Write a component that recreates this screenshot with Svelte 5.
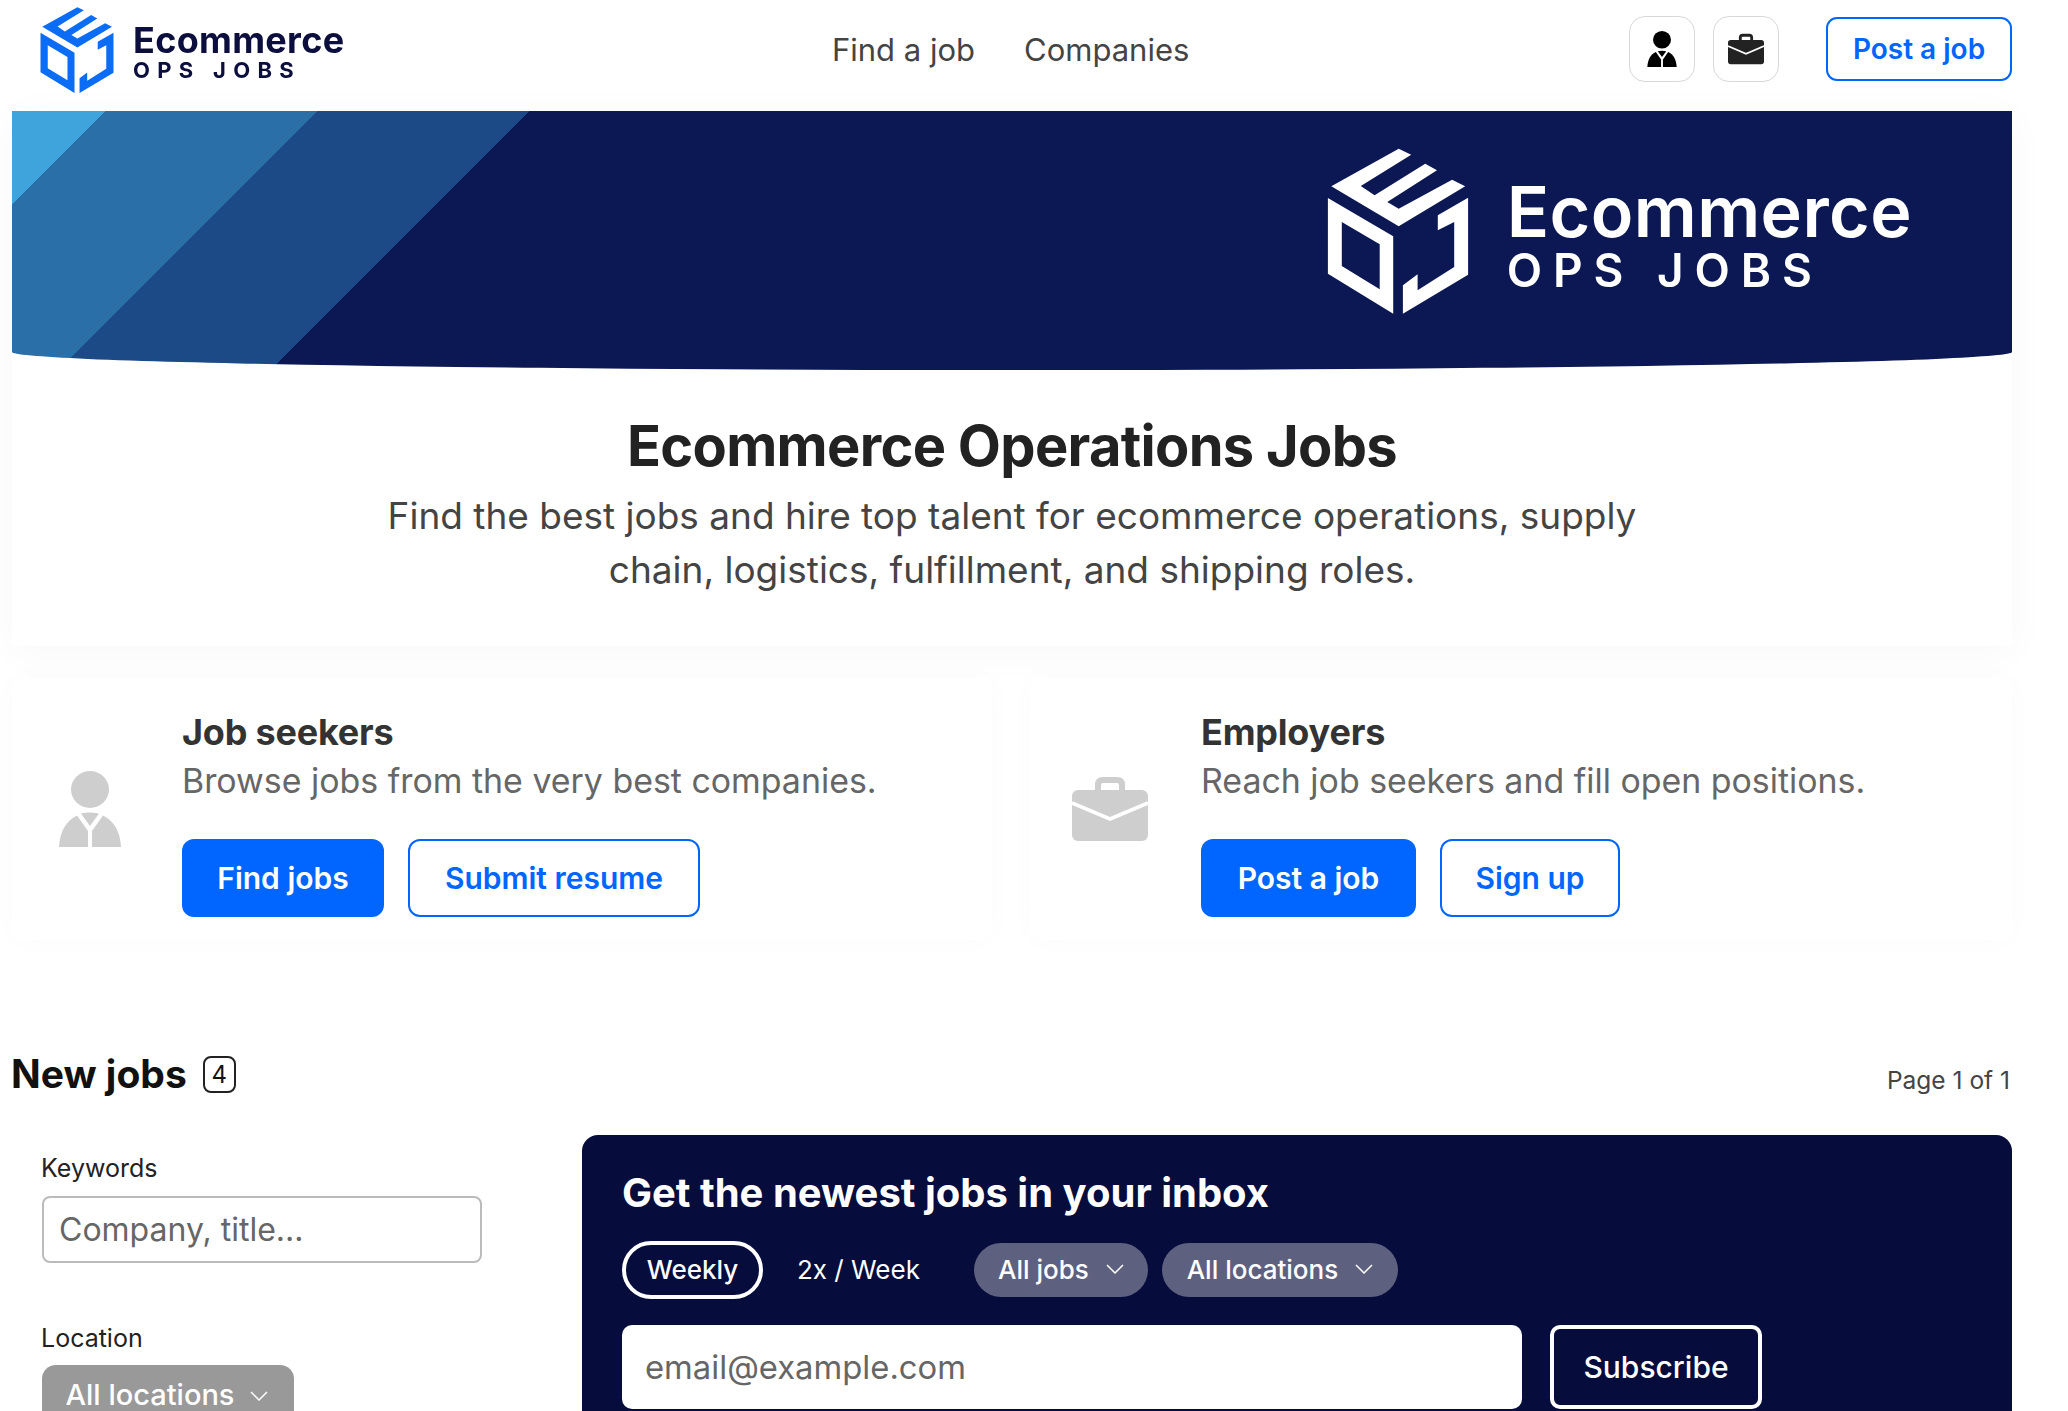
{#snippet cube()}
  <svg class="cube-svg" viewBox="0 0 146 168" aria-hidden="true">
    <path fill="currentColor" d="M73.7 1.7 86.2 7.7 35.8 39 49.6 48.3 100.2 16.7 112 23.3 62.3 55 73.7 61.7 127.1 32.7 140.2 39.3 73.7 79.3 6.3 39.3Z"/>
    <path fill="currentColor" fill-rule="evenodd" d="M2.9 51 68.2 89.3V166.7L2.9 126.7ZM16.8 75V119L54.7 142.3V97.3Z"/>
    <path fill="currentColor" d="M143.1 50.7V127.7L77.9 166.7V138.3L92.6 127.3V143.3L129.2 120V75L112.8 83.3V68.3Z"/>
  </svg>
{/snippet}

{#snippet person()}
  <svg class="fill-svg" viewBox="0 0 62 76" aria-hidden="true">
    <ellipse cx="31" cy="18.5" rx="19" ry="18.5" fill="currentColor"/>
    <path fill="currentColor" d="M22 42.5Q31 40.5 40 42.5L31 55Z"/>
    <path fill="currentColor" d="M0 76C1 60 7 50 18 44.5L29 60V76Z"/>
    <path fill="currentColor" d="M62 76C61 60 55 50 44 44.5L33 60V76Z"/>
  </svg>
{/snippet}

{#snippet briefcase()}
  <svg class="fill-svg" viewBox="0 0 76 64" aria-hidden="true">
    <path fill="none" stroke="currentColor" stroke-width="6" d="M26 14V8Q26 3 31 3H45Q50 3 50 8V14"/>
    <rect y="13" width="76" height="51" rx="6" fill="currentColor"/>
    <path fill="none" stroke="#fff" stroke-width="3.6" d="M0 26 38 42 76 26"/>
  </svg>
{/snippet}

{#snippet chevron()}
  <svg class="chev" viewBox="0 0 18 10" aria-hidden="true">
    <path fill="none" stroke="currentColor" stroke-width="1.5" d="M1 1 9 9 17 1"/>
  </svg>
{/snippet}

<div class="page">
  <header class="nav">
    <div class="brand">
      <span class="brand-cube">{@render cube()}</span>
      <div class="brand-text">
        <span class="brand-top">Ecommerce</span>
        <span class="brand-sub">OPS JOBS</span>
      </div>
    </div>
    <nav class="links">
      <span>Find a job</span>
      <span>Companies</span>
    </nav>
    <div class="actions">
      <button class="icon-btn"><span class="ic-person">{@render person()}</span></button>
      <button class="icon-btn"><span class="ic-case">{@render briefcase()}</span></button>
      <button class="post">Post a job</button>
    </div>
  </header>

  <main class="wrap">
    <section class="hero">
      <div class="banner">
        <div class="banner-logo">
          <span class="banner-cube">{@render cube()}</span>
          <div class="banner-text">
            <span class="banner-top">Ecommerce</span>
            <span class="banner-sub">OPS JOBS</span>
          </div>
        </div>
      </div>
      <div class="hero-copy">
        <h1>Ecommerce Operations Jobs</h1>
        <p>Find the best jobs and hire top talent for ecommerce operations, supply chain, logistics, fulfillment, and shipping roles.</p>
      </div>
    </section>

    <section class="audience">
      <article class="card seeker">
        <div class="card-icon person-big">{@render person()}</div>
        <div class="card-body">
          <h2>Job seekers</h2>
          <p>Browse jobs from the very best companies.</p>
          <div class="btns">
            <button class="solid w-find">Find jobs</button>
            <button class="outline w-submit">Submit resume</button>
          </div>
        </div>
      </article>
      <article class="card employer">
        <div class="card-icon case-big">{@render briefcase()}</div>
        <div class="card-body">
          <h2>Employers</h2>
          <p>Reach job seekers and fill open positions.</p>
          <div class="btns">
            <button class="solid w-post">Post a job</button>
            <button class="outline w-sign">Sign up</button>
          </div>
        </div>
      </article>
    </section>

    <div class="list-head">
      <div class="list-title">
        <h2>New jobs</h2>
        <span class="count">4</span>
      </div>
      <span class="pages">Page 1 of 1</span>
    </div>

    <div class="cols">
      <aside class="filters">
        <label for="kw">Keywords</label>
        <input id="kw" placeholder="Company, title..." />
        <span class="label loc">Location</span>
        <button class="loc-select">All locations {@render chevron()}</button>
      </aside>
      <section class="inbox">
        <h3>Get the newest jobs in your inbox</h3>
        <div class="opts">
          <span class="freq on">Weekly</span>
          <span class="freq">2x / Week</span>
          <button class="pill p-jobs">All jobs {@render chevron()}</button>
          <button class="pill p-locs">All locations {@render chevron()}</button>
        </div>
        <div class="sub-row">
          <input class="email" placeholder="email@example.com" />
          <button class="subscribe">Subscribe</button>
        </div>
      </section>
    </div>
  </main>
</div>

<style>
  :global(body) {
    margin: 0;
    height: 1411px;
    overflow: hidden;
    background: #fff;
    font-family: Inter, "Liberation Sans", sans-serif;
  }
  button, input { font-family: inherit; box-sizing: border-box; }
  h1, h2, h3, p { margin: 0; }
  .page { width: 2068px; height: 1411px; overflow: hidden; }

  .cube-svg, .fill-svg { display: block; width: 100%; height: 100%; }

  .nav {
    height: 111px;
    padding: 0 56px 13px 39px;
    display: grid;
    grid-template-columns: 793px 1fr auto;
    align-items: center;
    box-sizing: border-box;
    background: #fff;
  }
  .brand { display: flex; align-items: flex-start; height: 98px; padding-top: 5px; box-sizing: border-box; }
  .brand-cube { width: 76px; height: 90px; color: #0b6cf5; flex: none; }
  .brand-text { display: flex; flex-direction: column; margin-left: 18px; color: #0c0f3d; padding-top: 17px; filter: blur(0.4px); }
  .brand-top { font-size: 36px; font-weight: 700; line-height: 36px; letter-spacing: 0.3px; }
  .brand-sub { font-size: 22px; font-weight: 700; line-height: 24px; letter-spacing: 7.3px; white-space: nowrap; }

  .links { display: flex; gap: 49px; font-size: 31px; color: #444; }

  .actions { display: flex; align-items: center; }
  .icon-btn {
    width: 66px; height: 66px; padding: 0;
    border: 1px solid #d8d8d8; border-radius: 16px; background: #fff;
    display: flex; align-items: center; justify-content: center; color: #000;
    margin-right: 18px;
  }
  .icon-btn + .icon-btn { margin-right: 47px; color: #222; }
  .ic-person { width: 30px; height: 36px; }
  .ic-case { width: 36px; height: 32px; }
  .post {
    width: 186px; height: 64px; border: 2px solid #0066ff; border-radius: 11px;
    background: #fff; color: #0066ff; font-size: 28px; font-weight: 600; padding: 0;
  }

  .wrap { margin-left: 12px; width: 2000px; }

  .hero { height: 535px; background: #fff; box-shadow: 0 6px 40px rgba(0, 0, 0, 0.03); }
  .banner {
    height: 259px;
    background: linear-gradient(135deg, #3fa3dc 66px, #2a6fa8 66px 216px, #1c4a86 216px 366px, #0c1854 366px);
    border-radius: 0 0 50% 50% / 0 0 18px 18px;
    display: flex; justify-content: flex-end;
  }
  .banner-logo { display: flex; align-items: flex-start; margin-right: 100px; padding-top: 36px; color: #fff; }
  .banner-cube { width: 146px; height: 168px; }
  .banner-text { display: flex; flex-direction: column; margin-left: 36px; padding-top: 30px; filter: blur(0.6px); }
  .banner-top { font-size: 70px; font-weight: 600; line-height: 70px; letter-spacing: 0.4px; }
  .banner-sub { font-size: 46px; font-weight: 600; line-height: 46px; letter-spacing: 10.9px; white-space: nowrap; }

  .hero-copy { text-align: center; padding-top: 45px; }
  h1 { font-size: 56px; font-weight: 700; line-height: 62px; color: #222; letter-spacing: -0.7px; }
  .hero-copy p { font-size: 37px; line-height: 54px; color: #444; width: 1300px; margin: 12px auto 0; }

  .audience { display: flex; justify-content: space-between; margin-top: 32px; height: 262px; }
  .card {
    display: flex; box-sizing: border-box; background: #fff; border-radius: 12px;
    box-shadow: 0 0 30px rgba(0, 0, 0, 0.02);
  }
  .seeker { width: 980px; }
  .employer { width: 982px; }
  .card-icon { flex: none; color: #cecece; }
  .person-big { width: 62px; height: 76px; margin: 93px 61px 0 47px; }
  .case-big { width: 76px; height: 64px; margin: 99px 53px 0 42px; }
  .card-body { padding-top: 32px; }
  .card h2 { font-size: 36px; font-weight: 700; line-height: 44px; color: #333; letter-spacing: -0.2px; }
  .card p { font-size: 33.9px; line-height: 44px; color: #666; margin-top: 5px; }
  .btns { display: flex; gap: 24px; margin-top: 36px; }
  .btns button { height: 78px; padding: 0; border-radius: 12px; font-size: 30px; font-weight: 600; }
  .solid { background: #0066ff; color: #fff; border: 0; }
  .outline { background: #fff; color: #0066ff; border: 2px solid #0066ff; }
  .w-find { width: 202px; }
  .w-submit { width: 292px; }
  .w-post { width: 215px; }
  .w-sign { width: 180px; }

  .list-head { display: flex; justify-content: space-between; align-items: center; margin-top: 110px; height: 48px; }
  .list-title { display: flex; align-items: center; gap: 16px; margin-left: -1px; }
  .list-title h2 { font-size: 39px; font-weight: 700; color: #111; line-height: 48px; }
  .count {
    width: 33px; height: 37px; box-sizing: border-box; border: 2px solid #222; border-radius: 8px;
    display: flex; align-items: center; justify-content: center; font-size: 24px; color: #111;
  }
  .pages { font-size: 24.5px; color: #444; padding: 11px 2px 0 0; }

  .cols { display: flex; margin-top: 37px; }
  .filters { width: 570px; flex: none; padding: 17px 0 0 29px; box-sizing: border-box; }
  .filters label, .label { display: block; font-size: 25px; line-height: 32px; color: #222; }
  .filters input {
    display: block; margin: 12px 0 0 1px; width: 440px; height: 67px; border: 2px solid #bbb; border-radius: 8px;
    padding: 0 15px; font-size: 32px; color: #222; background: #fff; outline: none;
  }
  input::placeholder { color: #666; opacity: 1; }
  .loc { margin-top: 59px; }
  .loc-select {
    margin: 11px 0 0 1px; width: 252px; height: 66px; border: 0; border-radius: 14px; background: #999; color: #fff;
    font-size: 29px; font-weight: 500; display: flex; align-items: flex-start; justify-content: center; gap: 16px; padding: 12px 2px 0 0;
  }

  .inbox {
    flex: 1; height: 420px; background: #060c3c; border-radius: 16px; padding: 31px 40px; box-sizing: border-box; color: #fff;
  }
  .inbox h3 { font-size: 40px; font-weight: 700; line-height: 54px; }
  .opts { display: flex; align-items: center; margin-top: 21px; font-size: 26px; }
  .freq { height: 58px; box-sizing: border-box; display: flex; align-items: center; border: 4px solid transparent; border-radius: 29px; padding-bottom: 2px; }
  .freq.on { width: 141px; justify-content: center; border-color: #fff; font-weight: 500; }
  .freq:not(.on) { margin: 0 50px 0 30px; }
  .pill {
    height: 54px; border: 0; border-radius: 27px; background: #5e6080; color: #fff; font-size: 26px; font-weight: 500;
    display: flex; align-items: center; justify-content: center; gap: 17px; padding: 0 0 2px;
  }
  .p-jobs { width: 174px; margin-right: 14px; }
  .p-locs { width: 236px; }
  .chev { width: 18px; height: 10px; flex: none; }
  .loc-select .chev { margin-top: 14px; }
  .sub-row { display: flex; align-items: center; margin-top: 26px; }
  .email {
    width: 900px; height: 84px; border: 0; border-radius: 10px; background: #fff; padding: 0 23px; font-size: 32.8px; color: #222; outline: none;
  }
  .subscribe {
    margin-left: 28px; width: 212px; height: 84px; background: transparent; color: #fff; border: 4px solid #fff; border-radius: 10px;
    font-size: 30px; font-weight: 500; padding: 0;
  }
</style>
